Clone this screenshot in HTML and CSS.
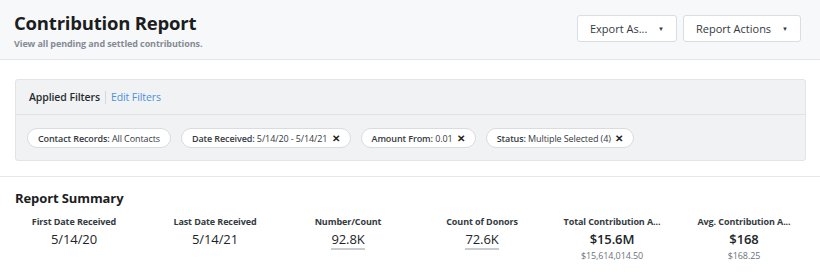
FILE: index.html
```html
<!DOCTYPE html>
<html>
<head>
<meta charset="utf-8">
<link rel="stylesheet" href="styles.css">
</head>
<body>
<header class="page-header">
  <div class="titles">
    <h1 class="title">Contribution Report</h1>
    <div class="subtitle">View all pending and settled contributions.</div>
  </div>
  <div class="actions">
    <button class="btn btn-export">Export As... <span class="caret">&#9660;</span></button>
    <button class="btn btn-report">Report Actions <span class="caret">&#9660;</span></button>
  </div>
</header>

<section class="filters">
  <div class="filters-head">
    <span class="filters-title">Applied Filters</span>
    <span class="sep"></span>
    <a class="edit-link">Edit Filters</a>
  </div>
  <div class="chips">
    <span class="chip"><b>Contact Records:</b> All Contacts</span>
    <span class="chip"><b>Date Received:</b> 5/14/20 - 5/14/21 <span class="x">&#10005;</span></span>
    <span class="chip"><b>Amount From:</b> 0.01 <span class="x">&#10005;</span></span>
    <span class="chip"><b>Status:</b> Multiple Selected (4) <span class="x">&#10005;</span></span>
  </div>
</section>

<section class="summary">
  <h2 class="summary-title">Report Summary</h2>
  <div class="stats">
    <div class="stat"><div class="label">First Date Received</div><div class="value">5/14/20</div></div>
    <div class="stat"><div class="label">Last Date Received</div><div class="value">5/14/21</div></div>
    <div class="stat"><div class="label">Number/Count</div><div class="value"><span class="ul">92.8K</span></div></div>
    <div class="stat"><div class="label">Count of Donors</div><div class="value"><span class="ul">72.6K</span></div></div>
    <div class="stat"><div class="label">Total Contribution A...</div><div class="value strong">$15.6M</div><div class="sub">$15,614,014.50</div></div>
    <div class="stat"><div class="label">Avg. Contribution A...</div><div class="value strong">$168</div><div class="sub">$168.25</div></div>
  </div>
</section>
</body>
</html>
```

FILE: styles.css
```css
* { box-sizing: border-box; }
body {
  margin: 0;
  font-family: "Open Sans", "Noto Sans", sans-serif;
  color: #212529;
  background: #fff;
}
.page-header {
  height: 60px;
  background: #f7f8fa;
  border-bottom: 1px solid #e3e6ea;
  display: flex;
  justify-content: space-between;
  align-items: flex-start;
  padding: 0 19px 0 14px;
}
.title {
  margin: 10px 0 0;
  font-size: 18.5px;
  font-weight: 700;
  line-height: 26px;
  color: #1b1d21;
  letter-spacing: -0.2px;
}
.subtitle {
  margin-top: 2px;
  font-size: 9px;
  font-weight: 700;
  color: #858b94;
  line-height: 12px;
  letter-spacing: -0.1px;
}
.actions {
  display: flex;
  gap: 6px;
  margin-top: 15px;
}
.btn {
  height: 27px;
  background: #fff;
  border: 1px solid #dadde2;
  border-radius: 3px;
  font-family: inherit;
  font-size: 11px;
  color: #343a40;
  display: flex;
  align-items: center;
  justify-content: space-between;
  padding: 0 12px 0 12px;
}
.btn-export { width: 100px; }
.btn-report { width: 118px; }
.caret { font-size: 6px; margin-left: 8px; }

.filters {
  margin: 19px 14px 0 15px;
  background: #f1f2f4;
  border: 1px solid #e2e4e8;
  border-radius: 3px;
  height: 82px;
}
.filters-head {
  height: 35px;
  border-bottom: 1px solid #e0e2e6;
  display: flex;
  align-items: center;
  padding-left: 13px;
  font-size: 10.5px;
  letter-spacing: -0.1px;
}
.filters-title { font-weight: 600; color: #272b30; }
.sep {
  width: 1px;
  height: 13px;
  background: #d4d7dc;
  margin: 0 5px 0 5px;
}
.edit-link { color: #4a90e2; }
.chips {
  display: flex;
  gap: 10px;
  padding: 13px 0 0 11px;
}
.chip {
  height: 20px;
  border: 1px solid #d8dbe0;
  background: #fff;
  border-radius: 10px;
  font-size: 9px;
  color: #343a40;
  display: flex;
  align-items: center;
  padding: 0 10px;
  white-space: pre;
  letter-spacing: -0.1px;
}
.chip b { font-weight: 600; }
.x { font-weight: 900; font-size: 10px; margin-left: 2px; color: #222; }

.summary {
  margin-top: 15px;
  border-top: 1px solid #e6e8eb;
  padding: 13px 15px 0;
}
.summary-title {
  margin: 0;
  font-size: 13px;
  font-weight: 700;
  line-height: 16px;
  color: #1b1d21;
  letter-spacing: -0.1px;
}
.stats {
  display: grid;
  grid-template-columns: 120px 162px 104px 164px 96px 168px;
  margin-left: -1px;
  margin-top: 9px;
}
.stat {
  display: flex;
  flex-direction: column;
  align-items: center;
  text-align: center;
}
.label {
  font-size: 9px;
  font-weight: 700;
  color: #343a40;
  white-space: nowrap;
  line-height: 14px;
  letter-spacing: -0.1px;
}
.value {
  font-size: 13px;
  color: #212529;
  line-height: 18px;
  margin-top: 1px;
  letter-spacing: -0.1px;
}
.value.strong { font-weight: 600; }
.ul { border-bottom: 2px solid #c8ccd1; padding-bottom: 0; }
.sub {
  font-size: 9px;
  color: #6c737b;
  line-height: 14px;
  margin-top: 1px;
  letter-spacing: -0.1px;
}
```
